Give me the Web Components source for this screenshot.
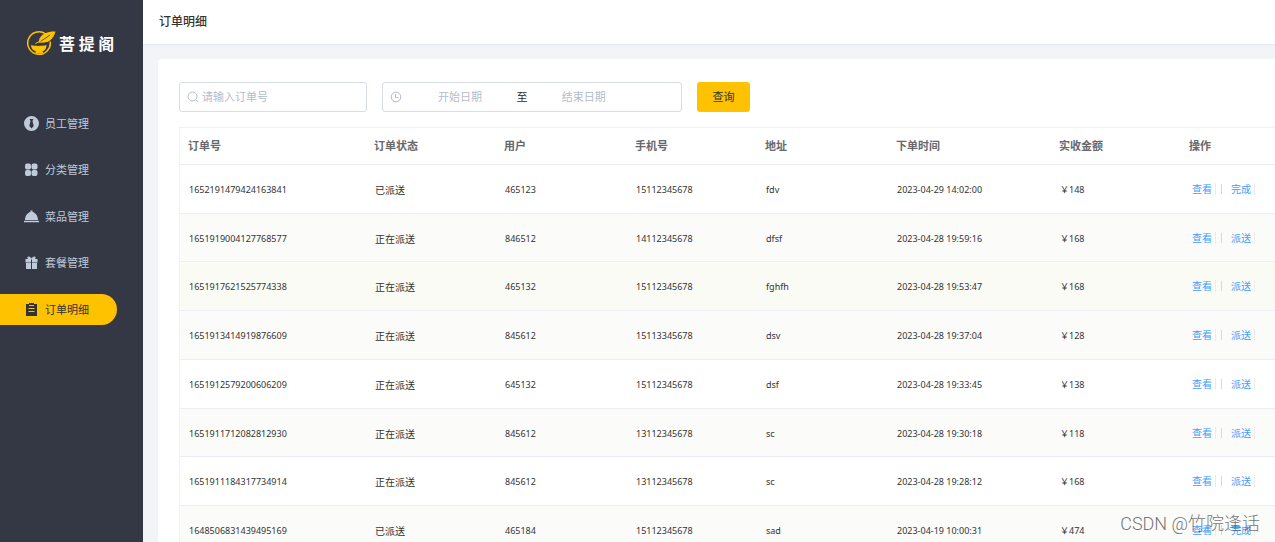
<!DOCTYPE html>
<html lang="zh-CN">
<head>
<meta charset="utf-8">
<title>订单明细</title>
<style>
  html, body {
    height: 100%;
  }

  body {
    margin: 0;
    overflow: hidden;
    font-family: "Noto Sans", "Noto Sans CJK SC", sans-serif;
    font-size: 11px;
    line-height: 16px;
    color: #333333;
  }
</style>
</head>
<body>
<order-app></order-app>

<template id="menu-item">
  <style>
    :host {
      display: block;
    }

    a {
      display: flex;
      align-items: center;
      gap: 6px;
      box-sizing: border-box;
      height: 31px;
      width: 82%;
      padding-left: 24px;
      border-radius: 0 16px 16px 0;
      color: #bfcbd9;
      text-decoration: none;
    }

    :host([active]) a {
      background: #ffc200;
      color: #333333;
    }

    svg {
      width: 15px;
      height: 15px;
      fill: currentColor;
    }
  </style>
  <a href="#"><svg viewBox="0 0 15 15" aria-hidden="true"></svg><slot></slot></a>
</template>

<template id="side-bar">
  <style>
    :host {
      display: block;
      background: #343744;
    }

    .logo {
      display: flex;
      align-items: center;
      gap: 3px;
      padding: 29px 0 0 26px;
      height: 28px;
      color: #ffffff;
      font: bold 16px/28px "Noto Sans CJK SC", sans-serif;
      white-space: nowrap;
    }

    .logo svg {
      flex: none;
      width: 30px;
      height: 27px;
    }

    nav {
      padding-top: 51px;
    }

    menu-item {
      margin-bottom: 15px;
    }

    menu-item:nth-child(even) {
      margin-bottom: 16px;
    }
  </style>
  <div class="logo">
    <svg viewBox="0 0 30 27" aria-hidden="true">
      <path d="M19.500 3.800A11.300 11.300 0 1 0 24.200 11.500" fill="none" stroke="#ffc200" stroke-width="1.500"/>
      <path d="M29.500 1.500C23 1 16 3.500 13.500 8.500L12.500 12.500C21 14 27.500 10 29.500 1.500Z" fill="#ffc200"/>
      <path d="M14.500 11.500L24 5" fill="none" stroke="#343744" stroke-width="0.800"/>
      <path d="M5 15C9 16.200 16 16.200 20.500 15C20.500 18.500 19 20.500 16.500 21.500L17.500 23.500H9L10 21.500C7 20.500 5 18.500 5 15Z" fill="#ffc200"/>
      <path d="M9.500 13.500L14.500 11" stroke="#ffc200"/>
    </svg>
    <span>菩 提 阁</span>
  </div>
  <nav>
    <menu-item icon="staff">员工管理</menu-item>
    <menu-item icon="category">分类管理</menu-item>
    <menu-item icon="dish">菜品管理</menu-item>
    <menu-item icon="combo">套餐管理</menu-item>
    <menu-item icon="order" active>订单明细</menu-item>
  </nav>
</template>

<template id="search-bar">
  <style>
    :host {
      display: flex;
      gap: 15px;
      height: 30px;
    }

    .box {
      display: flex;
      align-items: center;
      box-sizing: border-box;
      padding: 0 7px;
      border: 1px solid #d8dce5;
      border-radius: 3px;
      background: #ffffff;
    }

    .number {
      width: 188px;
      gap: 3px;
    }

    .range {
      width: 300px;
    }

    .range input {
      flex: none;
      width: 38%;
      text-align: center;
    }

    .range svg {
      margin-right: 4px;
    }

    svg {
      flex: none;
      width: 12px;
      height: 12px;
      fill: none;
      stroke: #b4bccc;
    }

    input {
      min-width: 0;
      width: 100%;
      padding: 0;
      border: 0;
      outline: 0;
      background: none;
      font: inherit;
      color: #606266;
    }

    input::placeholder {
      color: #b4bccc;
    }

    .to {
      width: 16px;
      text-align: center;
      color: #303133;
    }

    button {
      width: 53px;
      padding: 0;
      border: 0;
      border-radius: 3px;
      background: #ffc200;
      font: inherit;
      color: #333333;
    }
  </style>
  <label class="box number">
    <svg viewBox="0 0 12 12" aria-hidden="true"><circle cx="5.500" cy="5.500" r="4.500"/><path d="M8.800 8.800L11 11"/></svg>
    <input type="text" placeholder="请输入订单号" aria-label="订单号">
  </label>
  <div class="box range">
    <svg viewBox="0 0 12 12" aria-hidden="true"><circle cx="6" cy="6" r="4.800"/><path d="M5.500 3V6.500H8.500"/></svg>
    <input type="text" placeholder="开始日期" aria-label="开始日期">
    <span class="to">至</span>
    <input type="text" placeholder="结束日期" aria-label="结束日期">
  </div>
  <button type="button">查询</button>
</template>

<template id="order-table">
  <style>
    :host {
      display: block;
      border: 1px solid #f0f1f5;
      border-right: 0;
    }

    table {
      width: 100%;
      table-layout: fixed;
      border-collapse: separate;
      border-spacing: 0;
    }

    th, td {
      box-sizing: border-box;
      padding: 0 8px;
      border-bottom: 1px solid #ebeef5;
      text-align: left;
      white-space: nowrap;
    }

    th {
      height: 37px;
      font-weight: bold;
      color: #66686c;
    }

    td {
      height: 49px;
      padding: 2px 9px 0;
      font-size: 9px;
    }

    .status, .actions {
      font-size: 10px;
    }

    .actions {
      padding: 0 10px;
    }

    tbody tr:nth-child(4n+2) td {
      height: 48px;
    }

    tbody tr:nth-child(even) {
      background: #fbfbfa;
    }

    tbody tr.hover {
      background: #fafbf5;
    }

    .c1 { width: 186px; }
    .c2 { width: 130px; }
    .c3 { width: 131px; }
    .c4 { width: 163px; }

    .links {
      display: flex;
      align-items: center;
    }

    a {
      padding: 0 3px 0 1px;
      border-right: 1px solid #e8ebf1;
      line-height: 12px;
      color: #409eff;
      text-decoration: none;
    }

    .line {
      width: 1px;
      height: 10px;
      margin: 0 8px 0 5px;
      background: #d4d8e0;
    }
  </style>
  <table>
    <colgroup>
      <col class="c1"><col class="c2"><col class="c3"><col class="c2"><col class="c3"><col class="c4"><col class="c2"><col>
    </colgroup>
    <thead>
      <tr><th>订单号</th><th>订单状态</th><th>用户</th><th>手机号</th><th>地址</th><th>下单时间</th><th>实收金额</th><th>操作</th></tr>
    </thead>
    <tbody></tbody>
  </table>
</template>

<template id="order-app">
  <style>
    :host {
      display: grid;
      grid-template-columns: 143px minmax(0, 1fr);
      height: 100%;
      background: #f3f4f8;
    }

    main {
      display: flex;
      flex-direction: column;
      min-height: 0;
      overflow: hidden;
    }

    h1 {
      flex: none;
      margin: 0;
      padding: 14px 16px;
      background: #ffffff;
      box-shadow: 0 1px 2px #e4e6ec;
      font-size: 12px;
      font-weight: 500;
      line-height: 16px;
    }

    .card {
      flex: none;
      margin: 15px 0 0 15px;
      padding: 23px 0 0 21px;
      border-radius: 4px 0 0 0;
      background: #ffffff;
    }

    order-table {
      margin-top: 15px;
    }

    .mark {
      position: absolute;
      right: 15px;
      bottom: 6px;
      font: 300 18px/24px Roboto, "Noto Sans CJK SC", sans-serif;
      color: rgba(70, 70, 70, 0.75);
    }
  </style>
  <side-bar></side-bar>
  <main>
    <h1>订单明细</h1>
    <div class="card">
      <search-bar></search-bar>
      <order-table></order-table>
    </div>
  </main>
  <div class="mark">CSDN @竹院逢话</div>
</template>

<script>
const icons = {
  staff: '<path fill-rule="evenodd" d="M7.500 0A7.500 7.500 0 1 1 7.500 15A7.500 7.500 0 0 1 7.500 0ZM5.500 3L6.500 5L5.300 10L7.500 12.500L9.700 10L8.500 5L9.500 3Z"/>',
  category: '<rect x="1" y="1.500" width="6" height="6" rx="2"/><rect x="7.500" y="1.500" width="6" height="6" rx="2"/><rect x="1" y="8" width="6" height="6" rx="2"/><rect x="7.500" y="8" width="6" height="6" rx="2"/>',
  dish: '<path d="M6.500 1.500H8.500V3C11.500 3.500 14 7 14 11H1C1 7 3.500 3.500 6.500 3ZM0 11.700H15V13.200H0Z"/>',
  combo: '<path d="M2 4H4C2 1.500 5 0 7.500 3.500C10 0 13 1.500 11 4H13.500V7.500H8V4.500H7V7.500H1.500V4ZM2 8H7V14H2ZM8 8H13V14H8Z"/>',
  order: '<path fill-rule="evenodd" d="M2 2H5V1H10V2H13V14H2ZM5 3V4H10V3ZM4.500 6V7H10.500V6ZM4.500 9V10H10.500V9Z"/>'
}

const orders = [
  ['1652191479424163841', '已派送', '465123', '15112345678', 'fdv', '2023-04-29 14:02:00', '148', '完成'],
  ['1651919004127768577', '正在派送', '846512', '14112345678', 'dfsf', '2023-04-28 19:59:16', '168', '派送'],
  ['1651917621525774338', '正在派送', '465132', '15112345678', 'fghfh', '2023-04-28 19:53:47', '168', '派送'],
  ['1651913414919876609', '正在派送', '845612', '15113345678', 'dsv', '2023-04-28 19:37:04', '128', '派送'],
  ['1651912579200606209', '正在派送', '645132', '15112345678', 'dsf', '2023-04-28 19:33:45', '138', '派送'],
  ['1651911712082812930', '正在派送', '845612', '13112345678', 'sc', '2023-04-28 19:30:18', '118', '派送'],
  ['1651911184317734914', '正在派送', '845612', '13112345678', 'sc', '2023-04-28 19:28:12', '168', '派送'],
  ['1648506831439495169', '已派送', '465184', '15112345678', 'sad', '2023-04-19 10:00:31', '474', '完成']
]

class BaseElement extends HTMLElement {
  constructor() {
    super()
    this._shadowRoot = this.attachShadow({ mode: 'open' })
    const template = document.getElementById(this.localName)
    this._shadowRoot.appendChild(template.content.cloneNode(true))
  }
}

class MenuItem extends BaseElement {
  connectedCallback() {
    this._shadowRoot.querySelector('svg').innerHTML = icons[this.getAttribute('icon')]
  }
}

class SideBar extends BaseElement {}

class SearchBar extends BaseElement {}

class OrderTable extends BaseElement {
  set orders(orders) {
    this._shadowRoot.querySelector('tbody').innerHTML = orders.map(this.row).join('')
  }

  row([number, status, user, phone, address, time, amount, action], index) {
    return `<tr${index === 2 ? ' class="hover"' : ''}>
      <td>${number}</td>
      <td class="status">${status}</td>
      <td>${user}</td>
      <td>${phone}</td>
      <td>${address}</td>
      <td>${time}</td>
      <td>￥${amount}</td>
      <td class="actions"><div class="links"><a href="#">查看</a><span class="line"></span><a href="#">${action}</a></div></td>
    </tr>`
  }
}

class OrderApp extends BaseElement {
  connectedCallback() {
    this._shadowRoot.querySelector('order-table').orders = orders
  }
}

customElements.define('menu-item', MenuItem)
customElements.define('side-bar', SideBar)
customElements.define('search-bar', SearchBar)
customElements.define('order-table', OrderTable)
customElements.define('order-app', OrderApp)
</script>
</body>
</html>
